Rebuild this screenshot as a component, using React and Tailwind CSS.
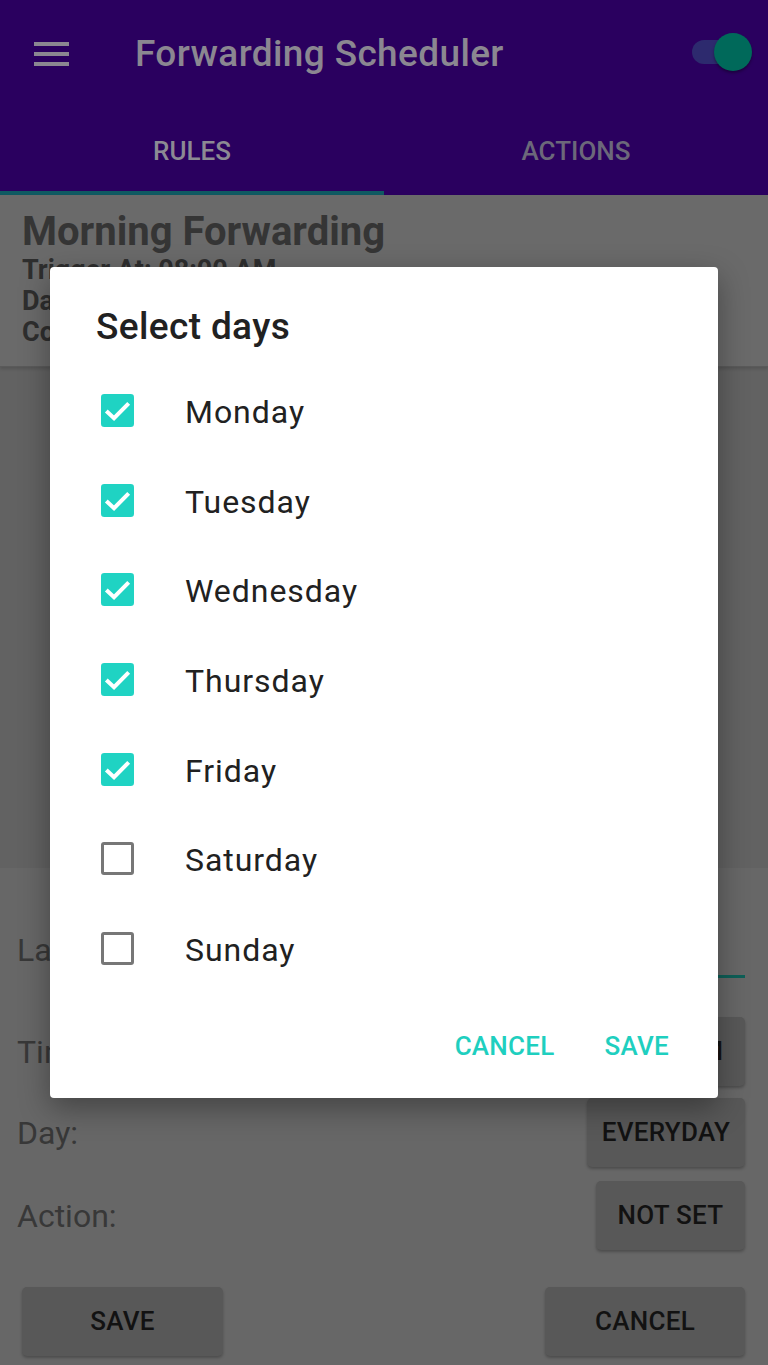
import { useState } from 'react';

const DAYS = [
  { name: 'Monday', on: true },
  { name: 'Tuesday', on: true },
  { name: 'Wednesday', on: true },
  { name: 'Thursday', on: true },
  { name: 'Friday', on: true },
  { name: 'Saturday', on: false },
  { name: 'Sunday', on: false },
];

function Check({ on }) {
  if (!on) {
    return <div className="w-[33px] h-[33px] rounded-[3px] border-[3.5px] border-[#777777] shrink-0" />;
  }
  return (
    <svg width="33" height="33" viewBox="0 0 18 18" className="shrink-0">
      <rect x="0" y="0" width="18" height="18" rx="1.8" fill="#1fd3c3" />
      <path d="M2.9 9.3 L7.1 13.2 L15.1 5.1" fill="none" stroke="#ffffff" strokeWidth="2.2" />
    </svg>
  );
}

function GrayButton({ children, className = '' }) {
  return (
    <div className={`h-[69px] rounded-[5px] bg-[#585858] shadow-[0_2px_3px_rgba(0,0,0,0.25)] flex items-center justify-center text-[26px] font-medium tracking-[0.01em] text-[#121212] ${className}`}>
      {children}
    </div>
  );
}

export default function App() {
  const [days, setDays] = useState(DAYS);

  return (
    <div className="relative w-[768px] h-[1365px] overflow-hidden bg-[#626262] font-['Roboto',sans-serif] flex flex-col">
      {/* App bar */}
      <header className="bg-[#2a005f] shrink-0">
        <div className="h-[112px] flex items-center">
          <div className="ml-[34px] -mt-[4px] w-[35px] flex flex-col gap-[6px]">
            <div className="h-[4px] bg-[#8b8791]" />
            <div className="h-[4px] bg-[#8b8791]" />
            <div className="h-[4px] bg-[#8b8791]" />
          </div>
          <h1 className="ml-[66px] -mt-[4px] text-[37px] font-medium tracking-[0.01em] text-[#8b8791] leading-[44px]">Forwarding Scheduler</h1>
          <div className="ml-auto mr-[16px] -mt-[8px] relative w-[60px] h-[40px] flex items-center">
            <div className="w-[50px] h-[24px] rounded-full bg-[#2d2a6e]" />
            <div className="absolute right-0 top-[1px] w-[38px] h-[38px] rounded-full bg-[#00695a] shadow-[0_2px_3px_rgba(0,0,0,0.35)]" />
          </div>
        </div>
        <div className="h-[83px] flex">
          <div className="flex-1 flex items-center justify-center border-b-[4px] border-[#0f5a62] text-[26px] font-medium text-[#8c8a93]">RULES</div>
          <div className="flex-1 flex items-center justify-center border-b-[4px] border-transparent text-[26px] font-medium text-[#6c687a]">ACTIONS</div>
        </div>
      </header>

      {/* Rule card */}
      <div className="shrink-0 bg-[#6a6a6a] border-b border-[#5a5a5a] shadow-[0_2px_3px_rgba(0,0,0,0.15)] px-[22px] pt-[13px] pb-[18px]">
        <div className="text-[40px] font-bold leading-[47px] text-[#353535]">Morning Forwarding</div>
        <div className="text-[27px] font-bold leading-[31px] text-[#2e2e2e]">
          <div>Trigger At: 08:00 AM</div>
          <div>Days: Weekdays</div>
          <div>Contact: Office</div>
        </div>
      </div>

      <div className="flex-1" />

      {/* Edit panel */}
      <div className="shrink-0 h-[497px] bg-[#676767] pl-[17px] pr-[23px] pt-[37px] flex flex-col text-[32px] text-[#383838]">
        <div className="h-[90px] flex items-center">
          <span>Label:</span>
          <div className="flex-1 ml-[12px] h-[56px] border-b-[3px] border-[#0e5f57]" />
        </div>
        <div className="mt-[22px] h-[69px] flex items-center justify-between">
          <span>Time:</span>
          <GrayButton className="w-[158px]">08:00 AM</GrayButton>
        </div>
        <div className="mt-[12px] h-[69px] flex items-center justify-between">
          <span>Day:</span>
          <GrayButton className="w-[158px]">EVERYDAY</GrayButton>
        </div>
        <div className="mt-[14px] h-[69px] flex items-center justify-between">
          <span>Action:</span>
          <GrayButton className="w-[149px]">NOT SET</GrayButton>
        </div>
        <div className="mt-[37px] pl-[5px] flex justify-between">
          <GrayButton className="w-[201px]">SAVE</GrayButton>
          <GrayButton className="w-[200px]">CANCEL</GrayButton>
        </div>
      </div>

      {/* Days dialog */}
      <div className="absolute inset-0 flex items-center justify-center">
        <div className="w-[668px] bg-white rounded-[4px] shadow-[0_10px_30px_rgba(0,0,0,0.35)] flex flex-col">
          <h2 className="pt-[38px] pl-[46px] text-[37px] font-medium tracking-[0.01em] leading-[44px] text-[#212121]">Select days</h2>
          <div className="mt-[17px]">
            {days.map((d, i) => (
              <div
                key={d.name}
                className="h-[89.6px] pl-[51px] flex items-center gap-[51px] cursor-pointer"
                onClick={() => setDays(days.map((x, j) => (j === i ? { ...x, on: !x.on } : x)))}
              >
                <Check on={d.on} />
                <span className="text-[32px] tracking-[0.03em] text-[#212121] pt-[3px]">{d.name}</span>
              </div>
            ))}
          </div>
          <div className="h-[105px] pt-[2px] pr-[34px] flex items-center justify-end gap-[20px] text-[26px] font-medium text-[#1fcfbf] tracking-[0.01em]">
            <button className="px-[15px]">CANCEL</button>
            <button className="px-[15px]">SAVE</button>
          </div>
        </div>
      </div>
    </div>
  );
}
